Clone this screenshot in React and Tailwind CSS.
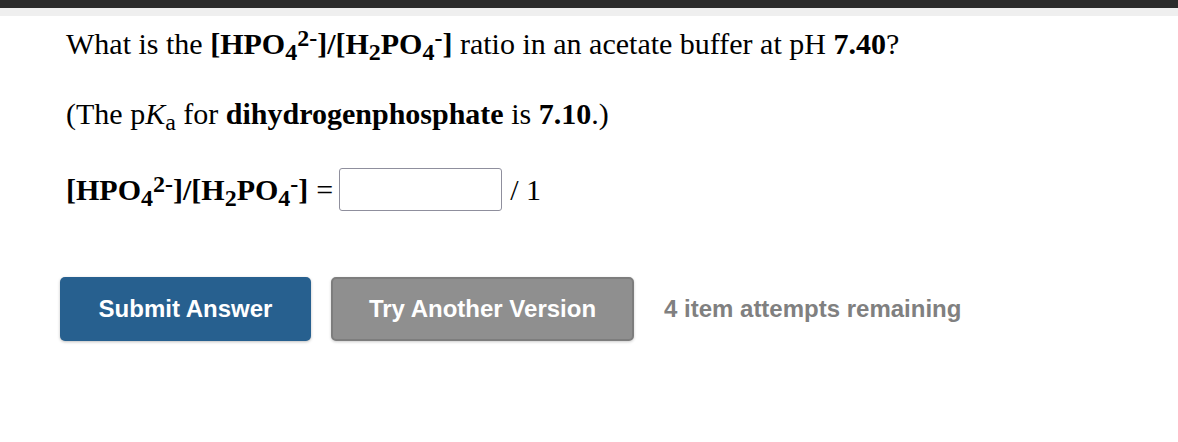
export default function App() {
  const ion = (
    <b>
      [HPO<sub className="text-[0.8em] leading-none">4</sub>
      <sup className="text-[0.8em] leading-none top-[-0.32em]">2-</sup>]/[H
      <sub className="text-[0.8em] leading-none">2</sub>PO
      <sub className="text-[0.8em] leading-none">4</sub>
      <sup className="text-[0.8em] leading-none top-[-0.32em]">-</sup>]
    </b>
  );

  return (
    <div className="w-[1178px] h-[442px] bg-white overflow-hidden">
      <div className="h-[8px] bg-[#2b2b2b]" />
      <div className="h-[8px] bg-[#efefef]" />

      <div className="pl-[66px] pt-[10px] font-['Liberation_Serif',serif] text-[30px] text-black leading-[36px]">
        <p className="h-[36px]">
          What is the {ion} ratio in an acetate buffer at pH <b>7.40</b>?
        </p>
        <p className="mt-[34px] h-[36px]">
          (The p<i>K</i>
          <sub className="text-[0.8em] leading-none">a</sub> for <b>dihydrogenphosphate</b> is{" "}
          <b>7.10</b>.)
        </p>
        <div className="mt-[36px] flex items-center h-[43px]">
          <span>{ion}</span>
          <span className="ml-[8px]">=</span>
          <input
            type="text"
            className="ml-[6px] w-[163px] h-[43px] border border-[#8f8f9d] rounded-[3px] bg-white outline-none"
          />
          <span className="ml-[8px]">/ 1</span>
        </div>
      </div>

      <div className="pl-[60px] mt-[66px] flex items-center font-['Liberation_Sans',sans-serif] font-bold text-[24px]">
        <button className="w-[251px] h-[64px] rounded-[5px] bg-[#27608f] text-white shadow-[0_1px_3px_rgba(0,0,0,0.25)]">
          Submit Answer
        </button>
        <button className="ml-[20px] w-[303px] h-[64px] rounded-[5px] bg-[#8f8f8f] border-2 border-[#7d7d7d] text-white shadow-[0_1px_3px_rgba(0,0,0,0.2)]">
          Try Another Version
        </button>
        <span className="ml-[30px] text-[#808080]">4 item attempts remaining</span>
      </div>
    </div>
  );
}
